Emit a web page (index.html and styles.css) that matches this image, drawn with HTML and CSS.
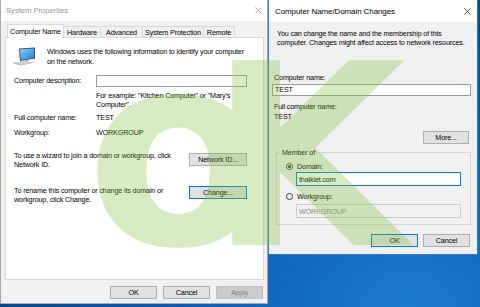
FILE: index.html
```html
<!DOCTYPE html>
<html>
<head>
<meta charset="utf-8">
<link rel="stylesheet" href="styles.css">
</head>
<body>
<div class="desktop">
  <section class="win sys">
    <header class="titlebar">
      <span class="title">System Properties</span>
      <svg class="close" viewBox="0 0 7 7"><path d="M0.5 0.5L6.5 6.5M6.5 0.5L0.5 6.5"/></svg>
    </header>
    <nav class="tabs">
      <span class="tab active">Computer Name</span>
      <span class="tab">Hardware</span>
      <span class="tab">Advanced</span>
      <span class="tab">System Protection</span>
      <span class="tab">Remote</span>
    </nav>
    <div class="panel">
      <div class="intro">
        <svg class="pc" viewBox="0 0 23 19">
          <defs>
            <linearGradient id="scr" x1="0" y1="0" x2="1" y2="1">
              <stop offset="0" stop-color="#8fd0f7"/>
              <stop offset="1" stop-color="#1b7fd6"/>
            </linearGradient>
          </defs>
          <path d="M6 1.5L22 0.5V11.5L7 14Z" fill="#3a4a5a"/>
          <path d="M7 2.3L21.2 1.4V10.8L7.8 13Z" fill="url(#scr)"/>
          <path d="M12 13L15 12.5L15.5 14.5L12.5 15Z" fill="#9aa6b0"/>
          <path d="M0.5 15.5L12 13.6L19.5 15.2L8 17.8Z" fill="#c9d1d8"/>
          <path d="M0.5 15.5L8 17.8L8 18.6L0.5 16.3Z" fill="#8d98a3"/>
          <path d="M8 17.8L19.5 15.2L19.5 16L8 18.6Z" fill="#a7b1ba"/>
        </svg>
        <p>Windows uses the following information to identify your computer<br>on the network.</p>
      </div>
      <div class="row r1">
        <span class="lbl">Computer description:</span>
        <div class="field"></div>
      </div>
      <p class="hint">For example: "Kitchen Computer" or "Mary's<br>Computer".</p>
      <div class="row r3">
        <span class="lbl">Full computer name:</span>
        <span>TEST</span>
      </div>
      <div class="row r4">
        <span class="lbl">Workgroup:</span>
        <span>WORKGROUP</span>
      </div>
      <div class="action a1">
        <p>To use a wizard to join a domain or workgroup, click<br>Network ID.</p>
        <button class="btn wide">Network ID...</button>
      </div>
      <div class="action a2">
        <p>To rename this computer or change its domain or<br>workgroup, click Change.</p>
        <button class="btn wide focus">Change...</button>
      </div>
    </div>
    <footer class="footer">
      <button class="btn">OK</button>
      <button class="btn">Cancel</button>
      <button class="btn" disabled>Apply</button>
    </footer>
  </section>

  <section class="win dlg">
    <header class="titlebar">
      <span class="title">Computer Name/Domain Changes</span>
      <svg class="close" viewBox="0 0 7 7"><path d="M0.5 0.5L6.5 6.5M6.5 0.5L0.5 6.5"/></svg>
    </header>
    <div class="body">
      <p class="dintro">You can change the name and the membership of this<br>computer. Changes might affect access to network resources.</p>
      <span class="dlabel">Computer name:</span>
      <div class="field dfield">TEST</div>
      <span class="dlabel l2">Full computer name:</span>
      <span class="dlabel l3">TEST</span>
      <button class="btn more">More...</button>
      <fieldset class="group">
        <legend>Member of</legend>
        <div class="radio-row"><span class="radio checked"></span><span>Domain:</span></div>
        <div class="field rfield active-field">thaikiet.com</div>
        <div class="radio-row r-wg"><span class="radio"></span><span>Workgroup:</span></div>
        <div class="field rfield disabled">WORKGROUP</div>
      </fieldset>
      <div class="dbuttons">
        <button class="btn focus">OK</button>
        <button class="btn">Cancel</button>
      </div>
    </div>
  </section>

  <svg class="watermark" viewBox="0 0 480 307">
    <g class="wm">
      <text x="86" y="244" class="wm-o">o</text>
      <text x="209" y="245" class="wm-k">K</text>
    </g>
  </svg>
</div>
</body>
</html>
```
FILE: styles.css
```css
* { box-sizing: border-box; }

body {
  margin: 0;
  font-family: "Liberation Sans", Arial, sans-serif;
  font-size: 7.2px;
  letter-spacing: -0.15px;
  color: #000;
}

p { margin: 0; }

.desktop {
  position: relative;
  width: 480px;
  height: 307px;
  overflow: hidden;
  background: radial-gradient(ellipse at 85% 100%, #1c7ad2 0%, #0d5fb8 35%, #0a4590 70%, #0b2f5e 100%);
}

.win {
  position: absolute;
  top: 0;
  background: #f0f0f0;
  display: flex;
  flex-direction: column;
}

.sys {
  left: 0;
  width: 268px;
  height: 304px;
  border: 1px solid #a9a9a9;
  border-top: 0;
}

.dlg {
  left: 268px;
  width: 210px;
  height: 255px;
  border: 1px solid #2b7bcc;
  border-top: 0;
}

.titlebar {
  flex: none;
  background: #fff;
  display: flex;
  align-items: center;
  justify-content: space-between;
}

.sys .titlebar {
  height: 21px;
  padding: 0 5.5px 0 5px;
  color: #9a9a9a;
  font-size: 7.8px;
  letter-spacing: -0.1px;
}

.dlg .titlebar {
  height: 22px;
  padding: 0 6.5px 0 6px;
  font-size: 8px;
  letter-spacing: -0.1px;
}

.close {
  width: 7px;
  height: 7px;
  fill: none;
  stroke-width: 0.8;
}

.sys .close { stroke: #9a9a9a; }
.dlg .close { stroke: #1a1a1a; }

/* tabs */
.tabs {
  flex: none;
  display: flex;
  height: 13px;
  margin: 3px 0 0 6px;
  position: relative;
  z-index: 1;
}

.tab {
  height: 11px;
  margin-top: 2px;
  margin-left: -1px;
  border: 1px solid #d9d9d9;
  border-bottom: 0;
  background: #f0f0f0;
  display: flex;
  align-items: center;
  justify-content: center;
  white-space: nowrap;
}

.tab:nth-child(1) { width: 57px; margin-left: 0; }
.tab:nth-child(2) { width: 38px; }
.tab:nth-child(3) { width: 43px; }
.tab:nth-child(4) { width: 62px; }
.tab:nth-child(5) { width: 32px; }

.tab.active {
  height: 14px;
  margin-top: 0;
  background: #fff;
}

/* panel */
.panel {
  flex: none;
  height: 243px;
  margin: 0 3px 0 4px;
  background: #fff;
  border: 1px solid #d9d9d9;
  padding: 9px 16px 0 8px;
  display: flex;
  flex-direction: column;
}

.intro {
  display: flex;
  gap: 11px;
  margin-left: -1px;
  line-height: 10px;
}

.pc {
  flex: none;
  width: 23px;
  height: 19px;
}

.row {
  display: flex;
  align-items: center;
  line-height: 9.5px;
}

.lbl {
  flex: none;
  width: 82px;
}

.r1 { margin-top: 8px; }
.r1 .field { flex: 1; }
.r3 { margin-top: 4px; }
.r4 { margin-top: 5.5px; }

.field {
  height: 12px;
  border: 1px solid #9a9a9a;
  background: #fff;
  display: flex;
  align-items: center;
  padding-left: 2px;
}

.hint {
  margin: 5px 0 0 82px;
  line-height: 8.5px;
}

.action {
  display: flex;
  justify-content: space-between;
  align-items: flex-start;
  line-height: 9px;
}

.a1 { margin-top: 13px; }
.a1 .btn { margin-top: 2.5px; }
.a2 { margin-top: 17px; }
.a2 .btn { margin-top: 0.5px; }

/* buttons */
.btn {
  flex: none;
  width: 47px;
  height: 13px;
  padding: 0;
  border: 1px solid #adadad;
  background: #e1e1e1;
  font: inherit;
  letter-spacing: inherit;
  color: #000;
  line-height: 1;
  display: flex;
  align-items: center;
  justify-content: center;
}

.btn.wide { width: 58px; }
.btn.focus { border-color: #0078d7; }

.btn:disabled {
  background: #cccccc;
  border-color: #bfbfbf;
  color: #838383;
}

.footer {
  display: flex;
  justify-content: flex-end;
  gap: 6px;
  margin-top: 6px;
  padding-right: 4px;
}

/* dialog */
.body {
  display: flex;
  flex-direction: column;
  padding: 0 6px 0 3px;
}

.dintro {
  margin: 6.5px 0 0 5px;
  line-height: 9px;
}

.dlabel {
  margin: 26px 0 0 2px;
  line-height: 9.5px;
}

.dlabel.l2 { margin-top: 6.25px; }
.dlabel.l3 { margin-top: 1px; }

.dfield { margin-top: 1.5px; }

.more {
  align-self: flex-end;
  width: 46px;
  margin: 9.25px 2px 0 0;
}

.group {
  margin: 4px 0 0 4px;
  padding: 0 9px 6px 4px;
  border: 1px solid #d5d5d5;
  min-width: 0;
}

.group legend {
  padding: 0 1px;
  line-height: 9.5px;
}

.radio-row {
  display: flex;
  align-items: center;
  gap: 4px;
  margin: 4px 0 0 5px;
  line-height: 9.5px;
}

.radio-row.r-wg { margin-top: 5.75px; }

.radio {
  width: 7px;
  height: 7px;
  border: 1px solid #333;
  border-radius: 50%;
  background: #fff;
  display: flex;
  align-items: center;
  justify-content: center;
}

.radio.checked::after {
  content: "";
  width: 3px;
  height: 3px;
  border-radius: 50%;
  background: #333;
}

.rfield {
  height: 14px;
  margin: 1px 0 0 15px;
}

.active-field { border-color: #0078d7; }

.rfield.disabled {
  margin-top: 2.75px;
  background: #f0f0f0;
  border-color: #cccccc;
  color: #8a8a8a;
}

.dbuttons {
  display: flex;
  justify-content: flex-end;
  gap: 5px;
  margin-top: 9px;
  padding-right: 1px;
}

/* watermark */
.watermark {
  position: absolute;
  left: 0;
  top: 0;
  width: 480px;
  height: 307px;
  pointer-events: none;
}

.wm {
  opacity: 0.3;
  fill: #7fc23a;
  font-family: "DejaVu Sans", sans-serif;
  font-weight: bold;
}

.wm-o { font-size: 268px; }
.wm-k { font-size: 254px; }
```
